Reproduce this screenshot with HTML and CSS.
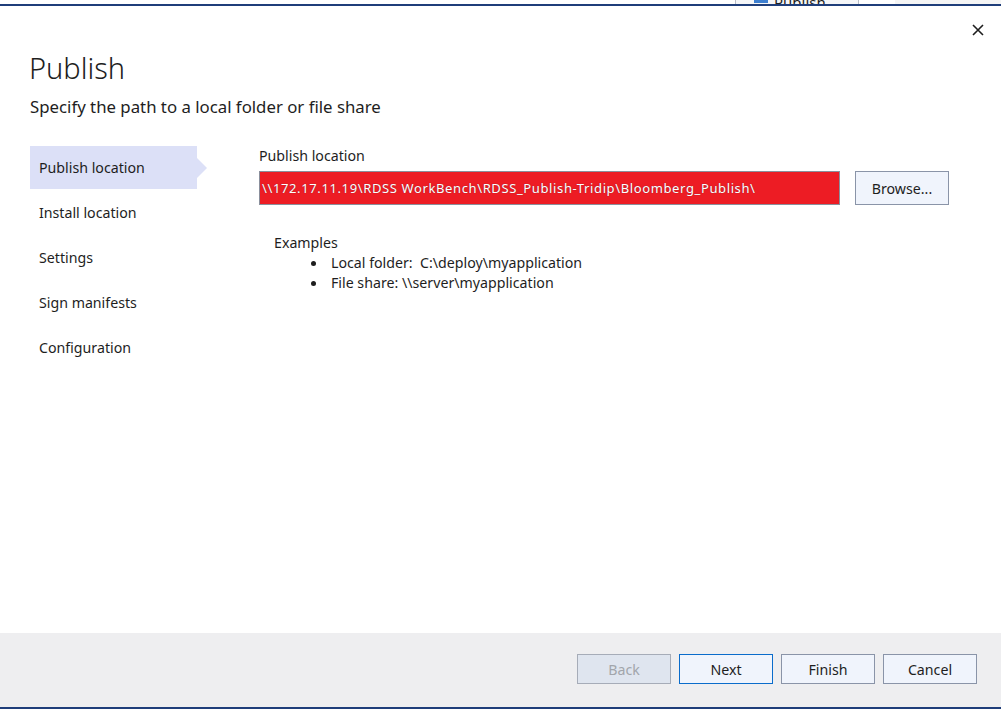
FILE: index.html
```html
<!DOCTYPE html>
<html>
<head>
<meta charset="utf-8">
<link rel="stylesheet" href="styles.css">
</head>
<body>
<div class="window">
  <div class="behind">
    <div class="behind-btn"><span class="behind-icon"></span><span class="behind-text">Publish</span></div>
    <div class="behind-panel"></div>
  </div>
  <div class="dialog">
    <div class="dialog-main">
      <div class="close-row">
        <svg class="close" width="12" height="12" viewBox="0 0 12 12"><path d="M1 1 L11 11 M11 1 L1 11" stroke="#1e1e1e" stroke-width="1.6" fill="none"/></svg>
      </div>
      <h1 class="title">Publish</h1>
      <p class="subtitle">Specify the path to a local folder or file share</p>
      <div class="content">
        <nav class="nav">
          <div class="nav-item active">Publish location</div>
          <div class="nav-item">Install location</div>
          <div class="nav-item">Settings</div>
          <div class="nav-item">Sign manifests</div>
          <div class="nav-item">Configuration</div>
        </nav>
        <div class="panel">
          <div class="field-label">Publish location</div>
          <div class="field-row">
            <div class="path-input"><span class="path-text">\\172.17.11.19\RDSS WorkBench\RDSS_Publish-Tridip\Bloomberg_Publish\</span></div>
            <button class="btn browse">Browse...</button>
          </div>
          <div class="examples">
            <div class="examples-title">Examples</div>
            <ul class="examples-list">
              <li>Local folder:&nbsp; C:\deploy\myapplication</li>
              <li>File share: \\server\myapplication</li>
            </ul>
          </div>
        </div>
      </div>
    </div>
    <div class="footer">
      <button class="btn disabled">Back</button>
      <button class="btn primary">Next</button>
      <button class="btn">Finish</button>
      <button class="btn">Cancel</button>
    </div>
  </div>
</div>
</body>
</html>
```

FILE: styles.css
```css
* { box-sizing: border-box; }
html, body { margin: 0; padding: 0; }
body {
  width: 1001px;
  height: 709px;
  overflow: hidden;
  background: #ffffff;
  font-family: "Noto Sans", "Open Sans", "Liberation Sans", sans-serif;
  color: #1e1e1e;
}
.window {
  display: flex;
  flex-direction: column;
  height: 709px;
}
.behind {
  height: 4px;
  display: flex;
  overflow: hidden;
  background: #ffffff;
}
.behind-btn {
  margin-left: 735px;
  width: 124px;
  height: 4px;
  border: 1px solid #b8bcc6;
  border-top: none;
  border-bottom: none;
  background: #f5f6f8;
  display: flex;
  gap: 6px;
  padding-left: 18px;
  overflow: hidden;
}
.behind-icon {
  width: 14px;
  height: 3px;
  background: #3d7fd0;
}
.behind-text {
  font-size: 15px;
  line-height: 4px;
  height: 4px;
  color: #1e1e1e;
  overflow: hidden;
}
.behind-panel {
  margin-left: 36px;
  flex: 1;
  background: #f5f5f5;
}
.dialog {
  flex: 1;
  display: flex;
  flex-direction: column;
  border-top: 2px solid #1f3e7a;
  border-bottom: 2px solid #1f3e7a;
}
.dialog-main {
  flex: 1;
  display: flex;
  flex-direction: column;
  padding: 0 0 0 30px;
}
.close-row {
  display: flex;
  justify-content: flex-end;
  padding: 18px 17px 0 0;
  height: 36px;
}
.close { display: block; }
.title {
  margin: 8px 0 0 -1px;
  font-size: 29px;
  font-weight: 300;
  line-height: 36px;
  color: #1e1e1e;
}
.subtitle {
  margin: 10px 0 0 0;
  font-size: 16.8px;
  line-height: 22px;
  color: #1e1e1e;
}
.content {
  display: flex;
  margin-top: 28px;
}
.nav {
  width: 229px;
  display: flex;
  flex-direction: column;
  gap: 2px;
}
.nav-item {
  position: relative;
  height: 43px;
  line-height: 43px;
  padding-left: 9px;
  font-size: 14.2px;
  width: 167px;
  color: #1e1e1e;
}
.nav-item.active {
  background: #dce0f7;
}
.nav-item.active::after {
  content: "";
  position: absolute;
  right: -10px;
  top: 12px;
  border-left: 10px solid #dce0f7;
  border-top: 10px solid transparent;
  border-bottom: 10px solid transparent;
}
.panel {
  display: flex;
  flex-direction: column;
  padding-top: 1px;
}
.field-label {
  font-size: 14.2px;
  line-height: 18px;
  margin-bottom: 6px;
}
.field-row {
  display: flex;
  gap: 15px;
}
.path-input {
  width: 581px;
  height: 34px;
  background: #ed1c24;
  border: 1px solid #8a8f9c;
  display: flex;
  align-items: center;
  padding-left: 2px;
  overflow: hidden;
}
.path-text {
  color: #ffffff;
  font-size: 13px;
  letter-spacing: 0.62px;
  white-space: nowrap;
  text-shadow: 0 0 1px #7a2030;
}
.btn {
  font-family: inherit;
  width: 94px;
  height: 30px;
  background: #f0f4fc;
  border: 1px solid #8a94a8;
  font-size: 14.2px;
  color: #1e1e1e;
  padding: 0;
}
.browse {
  height: 34px;
}
.examples {
  margin-top: 28px;
  margin-left: 15px;
  font-size: 14.2px;
  line-height: 20px;
}
.examples-list {
  margin: 0;
  padding-left: 57px;
  list-style: none;
}
.examples-list li {
  position: relative;
}
.examples-list li::before {
  content: "";
  position: absolute;
  left: -20px;
  top: 8px;
  width: 5px;
  height: 5px;
  border-radius: 50%;
  background: #1e1e1e;
}
.footer {
  height: 74px;
  background: #eeeef0;
  display: flex;
  justify-content: flex-end;
  align-items: flex-start;
  padding: 21px 24px 0 0;
  gap: 8px;
}
.btn.disabled {
  background: #dfe5ef;
  color: #a2a5ab;
  border-color: #a6acb8;
}
.btn.primary {
  border-color: #0a6ccb;
}
```
